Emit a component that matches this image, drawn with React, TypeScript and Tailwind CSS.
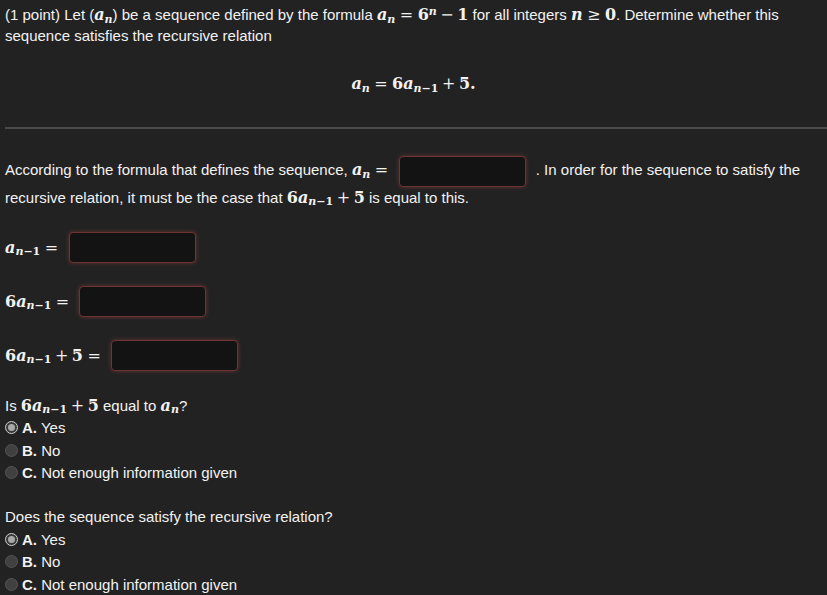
import React from 'react';

const mathFont = { fontFamily: '"DejaVu Serif", "Liberation Serif", serif' };

const M = ({ children }: { children: React.ReactNode }) => (
  <span className="font-bold text-[16px] whitespace-nowrap" style={mathFont}>
    {children}
  </span>
);

const I = ({ children }: { children: React.ReactNode }) => <i>{children}</i>;

// relation symbol (=, ≥) with TeX-like thick spacing
const Rel = ({ s }: { s: string }) => <span className="mx-[0.28em] font-normal">{s}</span>;
// binary operator (+, −) with medium spacing
const Op = ({ s }: { s: string }) => <span className="mx-[0.22em] font-normal">{s}</span>;

const An = () => (
  <>
    <I>a</I>
    <sub className="text-[11px]">
      <I>n</I>
    </sub>
  </>
);

const An1 = () => (
  <>
    <I>a</I>
    <sub className="text-[11px]">
      <I>n</I>−1
    </sub>
  </>
);

const Box = ({ className = '' }: { className?: string }) => (
  <span
    className={`inline-block align-middle w-[127px] h-[31px] rounded-[4px] bg-[#131313] border border-[#6e3434] shadow-[0_0_4px_rgba(190,70,70,0.45)] ${className}`}
  />
);

const Radio = ({ checked, letter, label }: { checked?: boolean; letter: string; label: string }) => (
  <label className="flex items-center h-[22.5px]">
    {checked ? (
      <span className="w-[13px] h-[13px] rounded-full border-[1.5px] border-[#d0d0d0] bg-[#3a3a3a] flex items-center justify-center mr-[4px]">
        <span className="w-[7px] h-[7px] rounded-full bg-[#a9a9a9]" />
      </span>
    ) : (
      <span className="w-[13px] h-[13px] rounded-full border border-[#555555] bg-[#404040] mr-[4px]" />
    )}
    <span>
      <b>{letter}</b> {label}
    </span>
  </label>
);

const Row = ({ children, gap }: { children: React.ReactNode; gap: string }) => (
  <div className={`flex items-center h-[31px] ${gap}`}>
    {children}
  </div>
);

export default function App() {
  return (
    <div
      className="w-[827px] h-[595px] overflow-hidden bg-[#222222] text-[#f2f2f2] text-[15px] leading-[21px] px-[5px] pt-[4px]"
      style={{ fontFamily: '"Liberation Sans", Arial, sans-serif' }}
    >
      <p>
        (1 point) Let (<M><An /></M>) be a sequence defined by the formula{' '}
        <M>
          <An />
          <Rel s="=" />6<sup className="text-[11px]"><I>n</I></sup>
          <Op s="−" />1
        </M>{' '}
        for all integers{' '}
        <M>
          <I>n</I>
          <Rel s="≥" />0
        </M>
        . Determine whether this sequence satisfies the recursive relation
      </p>

      <div className="mt-[27px] text-center">
        <M>
          <An />
          <Rel s="=" />6<An1 />
          <Op s="+" />5.
        </M>
      </div>

      <hr className="mt-[33px] -mr-[5px] border-0 border-t-2 border-[#4a4a4a]" />

      <p className="mt-[28px] leading-[25px]">
        According to the formula that defines the sequence,{' '}
        <M>
          <An />
          <Rel s="=" />
        </M>
        <Box className="ml-[6px] mr-[6px] -my-[2px]" /> . In order for the sequence to satisfy the recursive relation, it
        must be the case that{' '}
        <M>
          6<An1 />
          <Op s="+" />5
        </M>{' '}
        is equal to this.
      </p>

      <div className="mt-[22px] flex flex-col gap-[23px]">
        <Row gap="gap-[6px]">
          <M>
            <An1 />
            <Rel s="=" />
          </M>
          <Box />
        </Row>
        <Row gap="gap-[5px]">
          <M>
            6<An1 />
            <Rel s="=" />
          </M>
          <Box />
        </Row>
        <Row gap="gap-[6px]">
          <M>
            6<An1 />
            <Op s="+" />5<Rel s="=" />
          </M>
          <Box />
        </Row>
      </div>

      <div className="mt-[24px]">
        <p className="leading-[22px]">
          Is{' '}
          <M>
            6<An1 />
            <Op s="+" />5
          </M>{' '}
          equal to{' '}
          <M>
            <An />
          </M>
          ?
        </p>
        <Radio checked letter="A." label="Yes" />
        <Radio letter="B." label="No" />
        <Radio letter="C." label="Not enough information given" />
      </div>

      <div className="mt-[22px]">
        <p className="leading-[22px]">Does the sequence satisfy the recursive relation?</p>
        <Radio checked letter="A." label="Yes" />
        <Radio letter="B." label="No" />
        <Radio letter="C." label="Not enough information given" />
      </div>
    </div>
  );
}
